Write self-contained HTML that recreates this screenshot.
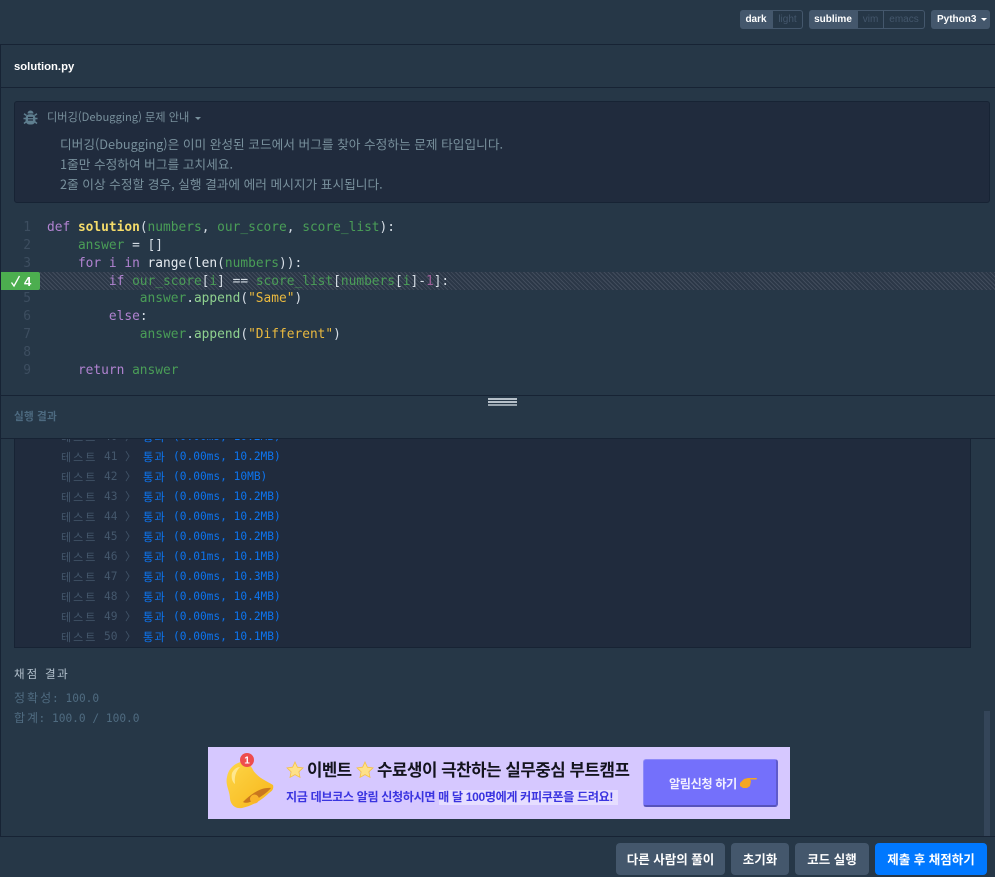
<!DOCTYPE html>
<html lang="ko"><head><meta charset="utf-8"><title>solution.py</title>
<style>
html,body{margin:0;padding:0}
body{width:995px;height:877px;position:relative;overflow:hidden;background:#263747;font-family:"Liberation Sans","Noto Sans CJK KR",sans-serif;color:#fff}
.a{position:absolute;white-space:pre}
.ln{position:absolute;left:0;width:31px;text-align:right;font:12.85px/18px "DejaVu Sans Mono",monospace;color:#3d4e60}
.c{position:absolute;left:47px;font:12.85px/18px "DejaVu Sans Mono","Noto Sans CJK KR",monospace;white-space:pre;color:#d5dde5}
.k{color:#b183d1}.v{color:#4a9e57}.f{color:#f5dc6a;font-weight:bold}.s{color:#e9b93f}.w{color:#e6ecf1}.n{color:#a0609a}
.b{font-weight:bold}
.tg{position:absolute;top:10px;height:19px;font-size:10px;line-height:19px;text-align:center;box-sizing:border-box;font-weight:bold}
.on{background:#44576c;color:#fff}
.off{border:1px solid #44576c;color:#44576c;font-weight:normal;line-height:17px}
.t{position:absolute;left:46px;width:400px;height:20px;font:11.2px/20px "DejaVu Sans Mono","Noto Sans CJK KR",monospace;color:#44576c;white-space:pre}
.t span{position:absolute;top:0}
.t .l{left:0;font-family:"Noto Sans CJK KR",sans-serif;font-size:11px;letter-spacing:2px}
.t .m{left:43px}
.t .g{left:64px;font-size:11px;font-family:"DejaVu Sans","Noto Sans CJK KR",sans-serif}
.t .o{left:82px;color:#0d74ee;font-family:"Noto Sans CJK KR",sans-serif;font-size:11.2px;letter-spacing:1.2px}
.t .r{left:112px;color:#0d74ee}
.btn{position:absolute;top:843px;height:32px;line-height:34px;border-radius:4px;background:#44576c;color:#fff;font-weight:bold;font-size:12.5px;text-align:center}
</style></head><body>
<!-- top toolbar -->
<div class="tg on" style="left:740px;width:32px;border-radius:3px 0 0 3px">dark</div>
<div class="tg off" style="left:772px;width:31px;border-radius:0 3px 3px 0">light</div>
<div class="tg on" style="left:809px;width:48px;border-radius:3px 0 0 3px">sublime</div>
<div class="tg off" style="left:857px;width:27px">vim</div>
<div class="tg off" style="left:884px;width:41px;border-radius:0 3px 3px 0;border-left:0">emacs</div>
<div class="tg on" style="left:931px;width:59px;border-radius:3px;text-align:left;padding-left:6px">Python3</div>
<div class="a" style="left:981px;top:18px;width:0;height:0;border:3px solid transparent;border-top-color:#fff;border-bottom:0"></div>

<!-- frame lines -->
<div class="a" style="left:0;top:44px;width:995px;height:1px;background:#172334"></div>
<div class="a" style="left:0;top:87px;width:995px;height:1px;background:#172334"></div>
<div class="a" style="left:0;top:44px;width:1px;height:793px;background:#172334"></div>
<div class="a b" style="left:14px;top:60px;font-size:11.3px;line-height:14px">solution.py</div>

<!-- notice -->
<div class="a" style="left:14px;top:101px;width:976px;height:102px;box-sizing:border-box;background:#202b3d;border:1px solid #172334;border-radius:3px"></div>
<svg class="a" style="left:23px;top:110px" width="15" height="15" viewBox="0 0 15 15"><path d="M4.5 3.5a3 3 0 0 1 6 0z" fill="#5f7f90"/><rect x="2.6" y="4.2" width="9.800" height="10.300" rx="3.800" fill="#5f7f90"/><path d="M3.500 5.500 1 3.800M11.500 5.500 14 3.800M3 8.500H.5M12 8.500h2.500M3.500 11.500 1 13.500M11.500 11.500 14 13.500" stroke="#5f7f90" stroke-width="1.500"/><path d="M5 7.500h5M5 10h5" stroke="#202b3d" stroke-width="1.300"/></svg>
<div class="a" style="left:47px;top:109px;font-family:'Noto Sans CJK KR',sans-serif;font-size:11.2px;line-height:16px;color:#78909c">디버깅(Debugging) 문제 안내</div>
<div class="a" style="left:195px;top:117px;width:0;height:0;border:3px solid transparent;border-top-color:#78909c;border-bottom:0"></div>
<div class="a" style="left:60px;top:133px;font-family:'Noto Sans CJK KR',sans-serif;font-size:12.7px;color:#78909c"><div style="height:21px;line-height:21px">디버깅(Debugging)은 이미 완성된 코드에서 버그를 찾아 수정하는 문제 타입입니다.</div><div style="height:20px;line-height:20px">1줄만 수정하여 버그를 고치세요.</div><div style="height:20px;line-height:20px">2줄 이상 수정할 경우, 실행 결과에 에러 메시지가 표시됩니다.</div></div>

<!-- code -->
<div class="a" style="left:40px;top:272px;width:955px;height:18px;background:repeating-linear-gradient(45deg,#414c5c 0 1px,#2b3747 1px 3px)"></div>
<div class="a" style="left:1px;top:272px;width:39px;height:18px;background:#4cae4f;border-radius:0 2px 2px 0"></div>
<svg class="a" style="left:10px;top:275px" width="12" height="13" viewBox="0 0 12 13"><path d="M1.500 7.500 4 11 9.500 1" fill="none" stroke="#fff" stroke-width="1.300"/></svg>
<div class="a b" style="left:24px;top:272px;font-size:13px;line-height:19px;color:#fff">4</div>

<div class="ln" style="top:219px">1</div><div class="ln" style="top:237px">2</div><div class="ln" style="top:255px">3</div>
<div class="ln" style="top:290px">5</div><div class="ln" style="top:308px">6</div><div class="ln" style="top:326px">7</div><div class="ln" style="top:344px">8</div><div class="ln" style="top:362px">9</div>

<div class="c" style="top:219px"><span class="k">def</span> <span class="f">solution</span>(<span class="v">numbers</span>, <span class="v">our_score</span>, <span class="v">score_list</span>):</div>
<div class="c" style="top:237px">    <span class="v">answer</span> = []</div>
<div class="c" style="top:255px">    <span class="k">for</span> <span class="k">i</span> <span class="k">in</span> <span class="w">range</span>(<span class="w">len</span>(<span class="v">numbers</span>)):</div>
<div class="c" style="top:273px">        <span class="k">if</span> <span class="v">our_score</span>[<span class="v">i</span>] == <span class="v">score_list</span>[<span class="v">numbers</span>[<span class="v">i</span>]-<span class="n">1</span>]:</div>
<div class="c" style="top:290px">            <span class="v">answer</span>.<span style="color:#8fd18f">append</span>(<span class="s">"Same"</span>)</div>
<div class="c" style="top:308px">        <span class="k">else</span>:</div>
<div class="c" style="top:326px">            <span class="v">answer</span>.<span style="color:#8fd18f">append</span>(<span class="s">"Different"</span>)</div>
<div class="c" style="top:362px">    <span class="k">return</span> <span class="v">answer</span></div>

<!-- result header -->
<div class="a" style="left:0;top:395px;width:995px;height:1px;background:#172334"></div>
<div class="a" style="left:0;top:438px;width:995px;height:1px;background:#172334"></div>
<div class="a" style="left:488px;top:398px;width:29px;height:2px;background:#b6c0c9"></div>
<div class="a" style="left:488px;top:401px;width:29px;height:2px;background:#b6c0c9"></div>
<div class="a" style="left:488px;top:404px;width:29px;height:2px;background:#98a4ae"></div>
<div class="a b" style="left:14px;top:410px;font-size:10.6px;line-height:14px;color:#4d6a80;letter-spacing:.2px">실행 결과</div>

<!-- terminal -->
<div class="a" style="left:14px;top:439px;width:957px;height:209px;box-sizing:border-box;background:#202b3d;border:1px solid #172334;border-top:0;overflow:hidden">
<div class="t" style="top:-12px"><span class="l">테스트</span><span class="m">40</span><span class="g">〉</span><span class="o">통과</span><span class="r">(0.00ms, 10.2MB)</span></div>
<div class="t" style="top:8px"><span class="l">테스트</span><span class="m">41</span><span class="g">〉</span><span class="o">통과</span><span class="r">(0.00ms, 10.2MB)</span></div>
<div class="t" style="top:28px"><span class="l">테스트</span><span class="m">42</span><span class="g">〉</span><span class="o">통과</span><span class="r">(0.00ms, 10MB)</span></div>
<div class="t" style="top:48px"><span class="l">테스트</span><span class="m">43</span><span class="g">〉</span><span class="o">통과</span><span class="r">(0.00ms, 10.2MB)</span></div>
<div class="t" style="top:68px"><span class="l">테스트</span><span class="m">44</span><span class="g">〉</span><span class="o">통과</span><span class="r">(0.00ms, 10.2MB)</span></div>
<div class="t" style="top:88px"><span class="l">테스트</span><span class="m">45</span><span class="g">〉</span><span class="o">통과</span><span class="r">(0.00ms, 10.2MB)</span></div>
<div class="t" style="top:108px"><span class="l">테스트</span><span class="m">46</span><span class="g">〉</span><span class="o">통과</span><span class="r">(0.01ms, 10.1MB)</span></div>
<div class="t" style="top:128px"><span class="l">테스트</span><span class="m">47</span><span class="g">〉</span><span class="o">통과</span><span class="r">(0.00ms, 10.3MB)</span></div>
<div class="t" style="top:148px"><span class="l">테스트</span><span class="m">48</span><span class="g">〉</span><span class="o">통과</span><span class="r">(0.00ms, 10.4MB)</span></div>
<div class="t" style="top:168px"><span class="l">테스트</span><span class="m">49</span><span class="g">〉</span><span class="o">통과</span><span class="r">(0.00ms, 10.2MB)</span></div>
<div class="t" style="top:188px"><span class="l">테스트</span><span class="m">50</span><span class="g">〉</span><span class="o">통과</span><span class="r">(0.00ms, 10.1MB)</span></div>
</div>

<!-- score -->
<div class="a" style="left:14px;top:664px;font:11.5px/20px 'Noto Sans CJK KR',sans-serif;letter-spacing:2px;color:#b2c0cc">채점</div>
<div class="a" style="left:45px;top:664px;font:11.5px/20px 'Noto Sans CJK KR',sans-serif;letter-spacing:1.5px;color:#b2c0cc">결과</div>
<div class="a" style="left:14px;top:688px;font:12px/20px 'Noto Sans CJK KR',sans-serif;letter-spacing:2px;color:#4f6b80">정확성</div>
<div class="a" style="left:52px;top:689px;font:11.2px/20px 'DejaVu Sans Mono',monospace;color:#4f6b80">: 100.0</div>
<div class="a" style="left:14px;top:708px;font:12px/20px 'Noto Sans CJK KR',sans-serif;letter-spacing:2px;color:#4f6b80">합계</div>
<div class="a" style="left:38.500px;top:709px;font:11.2px/20px 'DejaVu Sans Mono',monospace;color:#4f6b80">: 100.0 / 100.0</div>

<!-- scrollbar -->
<div class="a" style="left:984px;top:711px;width:6px;height:126px;background:#344559"></div>

<!-- banner -->
<div class="a" style="left:208px;top:747px;width:582px;height:72px;background:#d6c8ff;overflow:hidden">
 <svg class="a" style="left:14px;top:6px" width="56" height="60" viewBox="0 0 56 60">
  <defs><linearGradient id="g" x1="0" y1="0" x2="1" y2="1"><stop offset="0" stop-color="#fdd648"/><stop offset="1" stop-color="#f7b519"/></linearGradient></defs>
  <path d="M16 10C22 7 28 10 31 17 35 24 44 28 51 32 52 36 50 38 47 40 40 47 30 53 20 55 13 56 9 52 8 46 8 38 3 32 5 24 6 17 11 12 16 10Z" fill="url(#g)"/>
  <path d="M10 20C12 16 15 14 18 14 14 18 12 24 13 31 10 29 9 24 10 20Z" fill="#fee78f"/>
  <path d="M21 49C28 42 38 34 49 35 44 41 36 46 28 49 25 50 23 50 21 49Z" fill="#c9771e"/>
  <circle cx="32.500" cy="46" r="4.500" fill="#f9b42b"/>
  <circle cx="25" cy="7" r="7" fill="#ee4d4d"/>
  <text x="25" y="10.500" font-family="Liberation Sans" font-size="10" font-weight="bold" fill="#fff" text-anchor="middle">1</text>
 </svg>
 <svg class="a" style="left:78px;top:14px" width="18" height="18" viewBox="0 0 18 18"><path d="M9 1l2.400 5.200 5.600.700-4.100 3.900 1.100 5.600L9 13.600l-5 2.800 1.100-5.600L1 6.900l5.600-.700z" fill="#fde08a" stroke="#f6c244" stroke-width=".8"/></svg>
 <svg class="a" style="left:148px;top:14px" width="18" height="18" viewBox="0 0 18 18"><path d="M9 1l2.400 5.200 5.600.700-4.100 3.900 1.100 5.600L9 13.600l-5 2.800 1.100-5.600L1 6.900l5.600-.700z" fill="#fde08a" stroke="#f6c244" stroke-width=".8"/></svg>
 <div class="a b" style="left:99px;top:12px;font-size:16.8px;line-height:24px;color:#14141e;letter-spacing:-.6px">이벤트</div>
 <div class="a b" style="left:169px;top:12px;font-size:16.8px;line-height:24px;color:#14141e;letter-spacing:-.45px">수료생이 극찬하는 실무중심 부트캠프</div>
 <div class="a" style="left:231px;top:43px;width:179px;height:15px;background:#e6deff"></div>
 <div class="a b" style="left:78px;top:42px;font-size:12.1px;line-height:17px;color:#3a34e0;letter-spacing:-.35px">지금 데브코스 알림 신청하시면 매 달 100명에게 커피쿠폰을 드려요!</div>
 <div class="a" style="left:435px;top:12px;width:135px;height:48px;box-sizing:border-box;background:#7470fb;border-radius:3px;border:1px solid #8e8af8;border-bottom:2px solid #5753bb;border-right:2px solid #5f5bcb"></div>
 <div class="a b" style="left:461px;top:28px;font-size:12.2px;line-height:18px;color:#f2f0ff;letter-spacing:-.4px">알림신청 하기</div>
 <svg class="a" style="left:531px;top:29px" width="18" height="14" viewBox="0 0 18 14"><path d="M1 7 5 3 9 2h9l-.5 1.500H11l1 1.500-1 5-3 2H4L1 10z" fill="#f4a623"/></svg>
</div>

<!-- footer -->
<div class="a" style="left:0;top:836px;width:995px;height:1px;background:#172334"></div>
<div class="btn" style="left:616px;width:109px">다른 사람의 풀이</div>
<div class="btn" style="left:731px;width:58px">초기화</div>
<div class="btn" style="left:795px;width:74px">코드 실행</div>
<div class="btn" style="left:875px;width:112px;background:#0078ff">제출 후 채점하기</div>
</body></html>
